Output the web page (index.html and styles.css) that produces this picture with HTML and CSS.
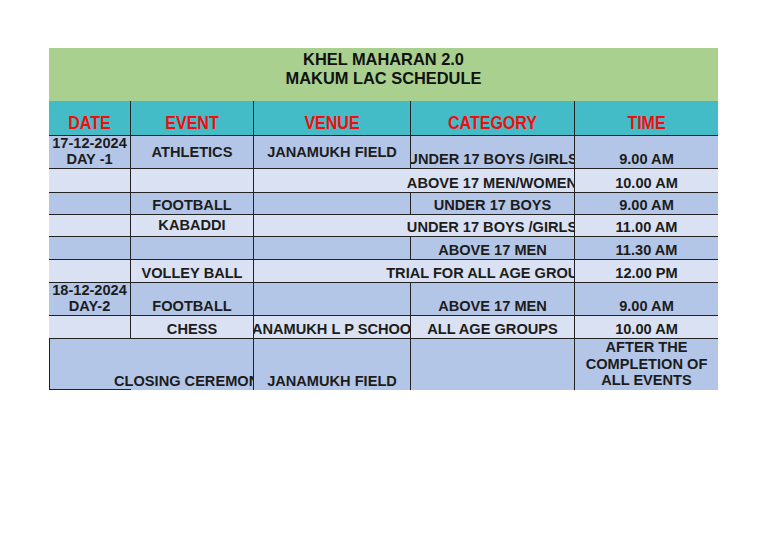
FILE: index.html
```html
<!DOCTYPE html>
<html>
<head>
<meta charset="utf-8">
<title>KHEL MAHARAN 2.0 - MAKUM LAC SCHEDULE</title>
<link rel="stylesheet" href="styles.css">
</head>
<body>
<div class="sheet">
  <div class="title">KHEL MAHARAN 2.0<br>MAKUM LAC SCHEDULE</div>

  <div class="c hd br bb"><span>DATE</span></div>
  <div class="c hd br bb"><span>EVENT</span></div>
  <div class="c hd br bb"><span>VENUE</span></div>
  <div class="c hd br bb"><span>CATEGORY</span></div>
  <div class="c hd bb"><span>TIME</span></div>

  <div class="c dk br bb"><span>17-12-2024<br>DAY -1</span></div>
  <div class="c dk br bb mid"><span>ATHLETICS</span></div>
  <div class="c dk br bb mid"><span>JANAMUKH FIELD</span></div>
  <div class="c dk br bb"><span>UNDER 17 BOYS /GIRLS</span></div>
  <div class="c dk bb"><span>9.00 AM</span></div>

  <div class="c lt br bb"></div>
  <div class="c lt br bb"></div>
  <div class="c lt br bb s34"><div class="in"><span>ABOVE 17 MEN/WOMEN</span></div></div>
  <div class="c lt bb"><span>10.00 AM</span></div>

  <div class="c dk br bb"></div>
  <div class="c dk br bb"><span>FOOTBALL</span></div>
  <div class="c dk br bb"></div>
  <div class="c dk br bb"><span>UNDER 17 BOYS</span></div>
  <div class="c dk bb"><span>9.00 AM</span></div>

  <div class="c lt br bb"></div>
  <div class="c lt br bb mid"><span>KABADDI</span></div>
  <div class="c lt br bb s34"><div class="in"><span>UNDER 17 BOYS /GIRLS</span></div></div>
  <div class="c lt bb"><span>11.00 AM</span></div>

  <div class="c dk br bb"></div>
  <div class="c dk br bb"></div>
  <div class="c dk br bb"></div>
  <div class="c dk br bb"><span>ABOVE 17 MEN</span></div>
  <div class="c dk bb"><span>11.30 AM</span></div>

  <div class="c lt br bb"></div>
  <div class="c lt br bb"><span>VOLLEY BALL</span></div>
  <div class="c lt br bb s34"><div class="in"><span>TRIAL FOR ALL AGE GROUPS</span></div></div>
  <div class="c lt bb"><span>12.00 PM</span></div>

  <div class="c dk br bb"><span>18-12-2024<br>DAY-2</span></div>
  <div class="c dk br bb"><span>FOOTBALL</span></div>
  <div class="c dk br bb"></div>
  <div class="c dk br bb"><span>ABOVE 17 MEN</span></div>
  <div class="c dk bb"><span>9.00 AM</span></div>

  <div class="c lt br bb"></div>
  <div class="c lt br bb"><span>CHESS</span></div>
  <div class="c lt br bb"><span>JANAMUKH L P SCHOOL</span></div>
  <div class="c lt br bb"><span>ALL AGE GROUPS</span></div>
  <div class="c lt bb"><span>10.00 AM</span></div>

  <div class="c dk br s12"><div class="in"><span>CLOSING CEREMONY</span></div></div>
  <div class="c dk br"><span>JANAMUKH FIELD</span></div>
  <div class="c dk br"></div>
  <div class="c dk last"><span>AFTER THE<br>COMPLETION OF<br>ALL EVENTS</span></div>
</div>
</body>
</html>
```

FILE: styles.css
```css
* {
  box-sizing: border-box;
}

html, body {
  margin: 0;
  padding: 0;
  background: #ffffff;
}

body {
  font-family: "Liberation Sans", Arial, sans-serif;
  font-weight: bold;
  color: #1c1c1c;
}

.sheet {
  margin: 48px 0 0 49px;
  width: 669px;
  display: grid;
  grid-template-columns: 82px 123px 157px 164px 143px;
  grid-template-rows: 53px 35px 33px 24px 22px 22px 23px 23px 33px 23px 51px;
}

.title {
  grid-column: 1 / -1;
  background: #a9d08e;
  text-align: center;
  font-size: 16.4px;
  line-height: 19px;
  padding-top: 2px;
  color: #111111;
}

.c {
  display: flex;
  justify-content: center;
  align-items: flex-end;
  overflow: hidden;
  white-space: nowrap;
  text-align: center;
  font-size: 14.6px;
  line-height: 16.7px;
}

.c > span,
.in > span {
  flex: none;
}

.hd {
  background: #43bcc7;
  color: #f20d0d;
  font-size: 16px;
  line-height: 18px;
  padding-bottom: 2px;
}

.hd > span {
  display: inline-block;
  transform: scaleY(1.14);
  transform-origin: 50% 80%;
}

.dk {
  background: #b4c6e7;
}

.lt {
  background: #d9e1f2;
}

.br {
  border-right: 1px solid #222222;
}

.bb {
  border-bottom: 1px solid #222222;
}

.mid {
  align-items: center;
}

.s34 {
  grid-column: 3 / 5;
  justify-content: flex-end;
}

.s34 .in {
  flex: none;
  width: 164px;
  display: flex;
  justify-content: center;
}

.s12 {
  grid-column: 1 / 3;
  justify-content: flex-end;
  border-left: 1px solid #222222;
  background: linear-gradient(#222222, #222222) no-repeat left bottom / 81px 1px, #b4c6e7;
}

.s12 .in {
  flex: none;
  width: 123px;
  display: flex;
  justify-content: center;
}

.last {
  padding-bottom: 1px;
}
```
